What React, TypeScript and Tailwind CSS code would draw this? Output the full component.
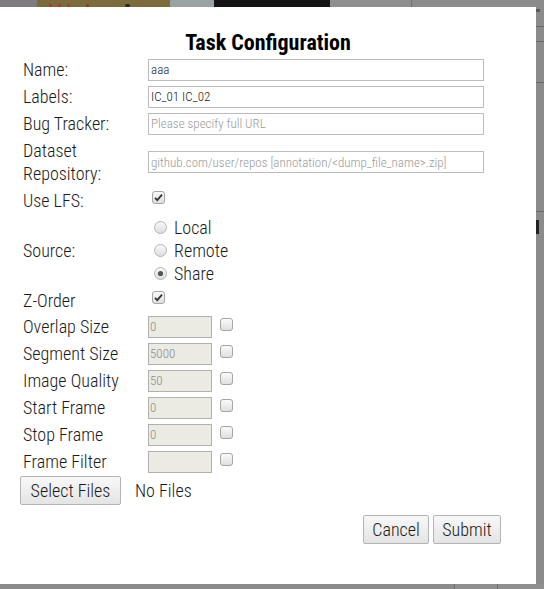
import React from "react";

const FONT = "font-['Roboto',sans-serif] font-stretch-[75%] font-[350]";

function Check({ checked }: { checked?: boolean }) {
  return (
    <svg width="13" height="13" viewBox="0 0 13 13" className="block">
      <defs>
        <linearGradient id="cbg" x1="0" y1="0" x2="0" y2="1">
          <stop offset="0" stopColor="#fbfbfb" />
          <stop offset="1" stopColor="#dedede" />
        </linearGradient>
      </defs>
      <rect x="0.5" y="0.5" width="12" height="12" rx="2.5" fill="url(#cbg)" stroke="#a6a6a6" />
      {checked && <path d="M3 6.8 L5.3 9.2 L10 3.6" fill="none" stroke="#333" strokeWidth="1.8" />}
    </svg>
  );
}

function Radio({ checked }: { checked?: boolean }) {
  return (
    <svg width="13" height="13" viewBox="0 0 13 13" className="block">
      <defs>
        <linearGradient id="rbg" x1="0" y1="0" x2="0" y2="1">
          <stop offset="0" stopColor="#fafafa" />
          <stop offset="1" stopColor="#dcdcdc" />
        </linearGradient>
      </defs>
      <circle cx="6.5" cy="6.5" r="6" fill="url(#rbg)" stroke="#b4b4b4" />
      {checked && <circle cx="6.5" cy="6.5" r="2.6" fill="#555" />}
    </svg>
  );
}

function Row({ label, h = "h-[27px]", children }: { label: React.ReactNode; h?: string; children: React.ReactNode }) {
  return (
    <div className={`flex items-center ${h}`}>
      <div className="w-[125px] text-[18px] leading-[23px] text-[#1a1a1a]">{label}</div>
      <div className="flex items-center">{children}</div>
    </div>
  );
}

function TextInput({ value, placeholder }: { value?: string; placeholder?: string }) {
  return (
    <div className="w-[336px] h-[22px] border border-[#bcbcbc] bg-white flex items-center px-[2px] text-[13px] leading-none">
      {value ? <span className="text-[#222]">{value}</span> : <span className="text-[#9a9a9a]">{placeholder}</span>}
    </div>
  );
}

function SmallInput({ value }: { value: string }) {
  return (
    <div className="flex items-center">
      <div className="w-[64px] h-[22px] border border-[#b0b0b0] bg-[#ebebe4] flex items-center px-[1px] text-[13px] leading-none text-[#8a8a8a]">
        {value}
      </div>
      <div className="ml-[8px] -mt-[4px]">
        <Check />
      </div>
    </div>
  );
}

function Btn({ children, className = "" }: { children: React.ReactNode; className?: string }) {
  return (
    <div
      className={`h-[29px] flex items-center justify-center border border-[#b4b4b4] rounded-[2px] bg-gradient-to-b from-[#f8f8f8] to-[#e4e4e4] text-[18px] text-[#1a1a1a] ${className}`}
    >
      {children}
    </div>
  );
}

export default function App() {
  return (
    <div className={`w-[544px] h-[589px] flex flex-col bg-[#8b8b8b] overflow-hidden ${FONT}`}>
      {/* dimmed page behind the dialog */}
      <div className="h-[7px] flex shrink-0">
        <div className="w-[37px] bg-[#7d7b7e]" />
        <div className="w-[133px] bg-[#7b6a3c] flex items-end gap-[6px] pl-[12px]">
          <div className="w-[3px] h-[3px] bg-[#a83a2a] rounded-full" />
          <div className="w-[3px] h-[3px] bg-[#a83a2a] rounded-full" />
          <div className="w-[3px] h-[3px] bg-[#a83a2a] rounded-full" />
          <div className="w-[3px] h-[3px] bg-[#8a3226] rounded-full ml-[10px]" />
          <div className="w-[5px] h-[3px] bg-[#2e2a20] rounded-full ml-[30px]" />
        </div>
        <div className="w-[44px] bg-[#9aa3a4]" />
        <div className="w-[116px] bg-[#141414]" />
        <div className="w-[81px] bg-[#8f8f8f]" />
        <div className="w-[1px] bg-[#6f6f6f]" />
        <div className="flex-1 bg-[#8b8b8b]" />
      </div>

      <div className="flex flex-1">
        <div className="w-[536px] bg-white pt-[23px] pl-[23px] pr-[35px] flex flex-col">
          <div className="h-[26px] text-center text-[22px] leading-[26px] font-bold text-black -ml-[23px] mr-[-35px]">
            Task Configuration
          </div>

          <Row label="Name:">
            <TextInput value="aaa" />
          </Row>
          <Row label="Labels:">
            <TextInput value="IC_01 IC_02" />
          </Row>
          <Row label="Bug Tracker:">
            <TextInput placeholder="Please specify full URL" />
          </Row>
          <Row label={<>Dataset<br />Repository:</>} h="h-[50px]">
            <TextInput placeholder="github.com/user/repos [annotation/<dump_file_name>.zip]" />
          </Row>
          <Row label="Use LFS:" h="h-[26px]">
            <div className="ml-[4px] -mt-[5px]">
              <Check checked />
            </div>
          </Row>
          <Row label="Source:" h="h-[74px]">
            <div className="flex flex-col text-[18px] leading-[23px] text-[#1a1a1a]">
              {[
                ["Local", false],
                ["Remote", false],
                ["Share", true],
              ].map(([t, c]) => (
                <div key={t as string} className="flex items-center">
                  <div className="ml-[6px] mr-[7px]">
                    <Radio checked={c as boolean} />
                  </div>
                  {t as string}
                </div>
              ))}
            </div>
          </Row>
          <Row label="Z-Order" h="h-[26px]">
            <div className="ml-[4px] -mt-[5px]">
              <Check checked />
            </div>
          </Row>
          <Row label="Overlap Size">
            <SmallInput value="0" />
          </Row>
          <Row label="Segment Size">
            <SmallInput value="5000" />
          </Row>
          <Row label="Image Quality">
            <SmallInput value="50" />
          </Row>
          <Row label="Start Frame">
            <SmallInput value="0" />
          </Row>
          <Row label="Stop Frame">
            <SmallInput value="0" />
          </Row>
          <Row label="Frame Filter">
            <SmallInput value="" />
          </Row>

          <div className="flex items-center mt-[1px] -ml-[3px]">
            <Btn className="w-[101px]">Select Files</Btn>
            <span className="ml-[14px] text-[18px] text-[#1a1a1a]">No Files</span>
          </div>

          <div className="flex justify-end gap-[4px] mt-[10px]">
            <Btn className="w-[66px]">Cancel</Btn>
            <Btn className="w-[68px]">Submit</Btn>
          </div>
        </div>
        <div className="flex-1 bg-[#8b8b8b] flex flex-col">
          <div className="h-[3px] mt-[2px] bg-[#5c5c5c] w-[4px]" />
          <div className="h-[1px] mt-[14px] bg-[#6a6a6a]" />
          <div className="h-[1px] mt-[14px] bg-[#6a6a6a]" />
          <div className="h-[1px] mt-[40px] bg-[#6a6a6a]" />
          <div className="h-[1px] mt-[128px] bg-[#6a6a6a]" />
          <div className="h-[14px] mt-[8px] w-[3px] bg-[#222]" />
        </div>
      </div>

      <div className="h-[5px] shrink-0 flex">
        <div className="w-[454px] bg-[#8b8b8b]" />
        <div className="w-[1px] bg-[#6f6f6f]" />
        <div className="w-[42px] bg-[#8f8f8f]" />
        <div className="w-[1px] bg-[#6f6f6f]" />
        <div className="flex-1 bg-[#8f8f8f]" />
      </div>
    </div>
  );
}
